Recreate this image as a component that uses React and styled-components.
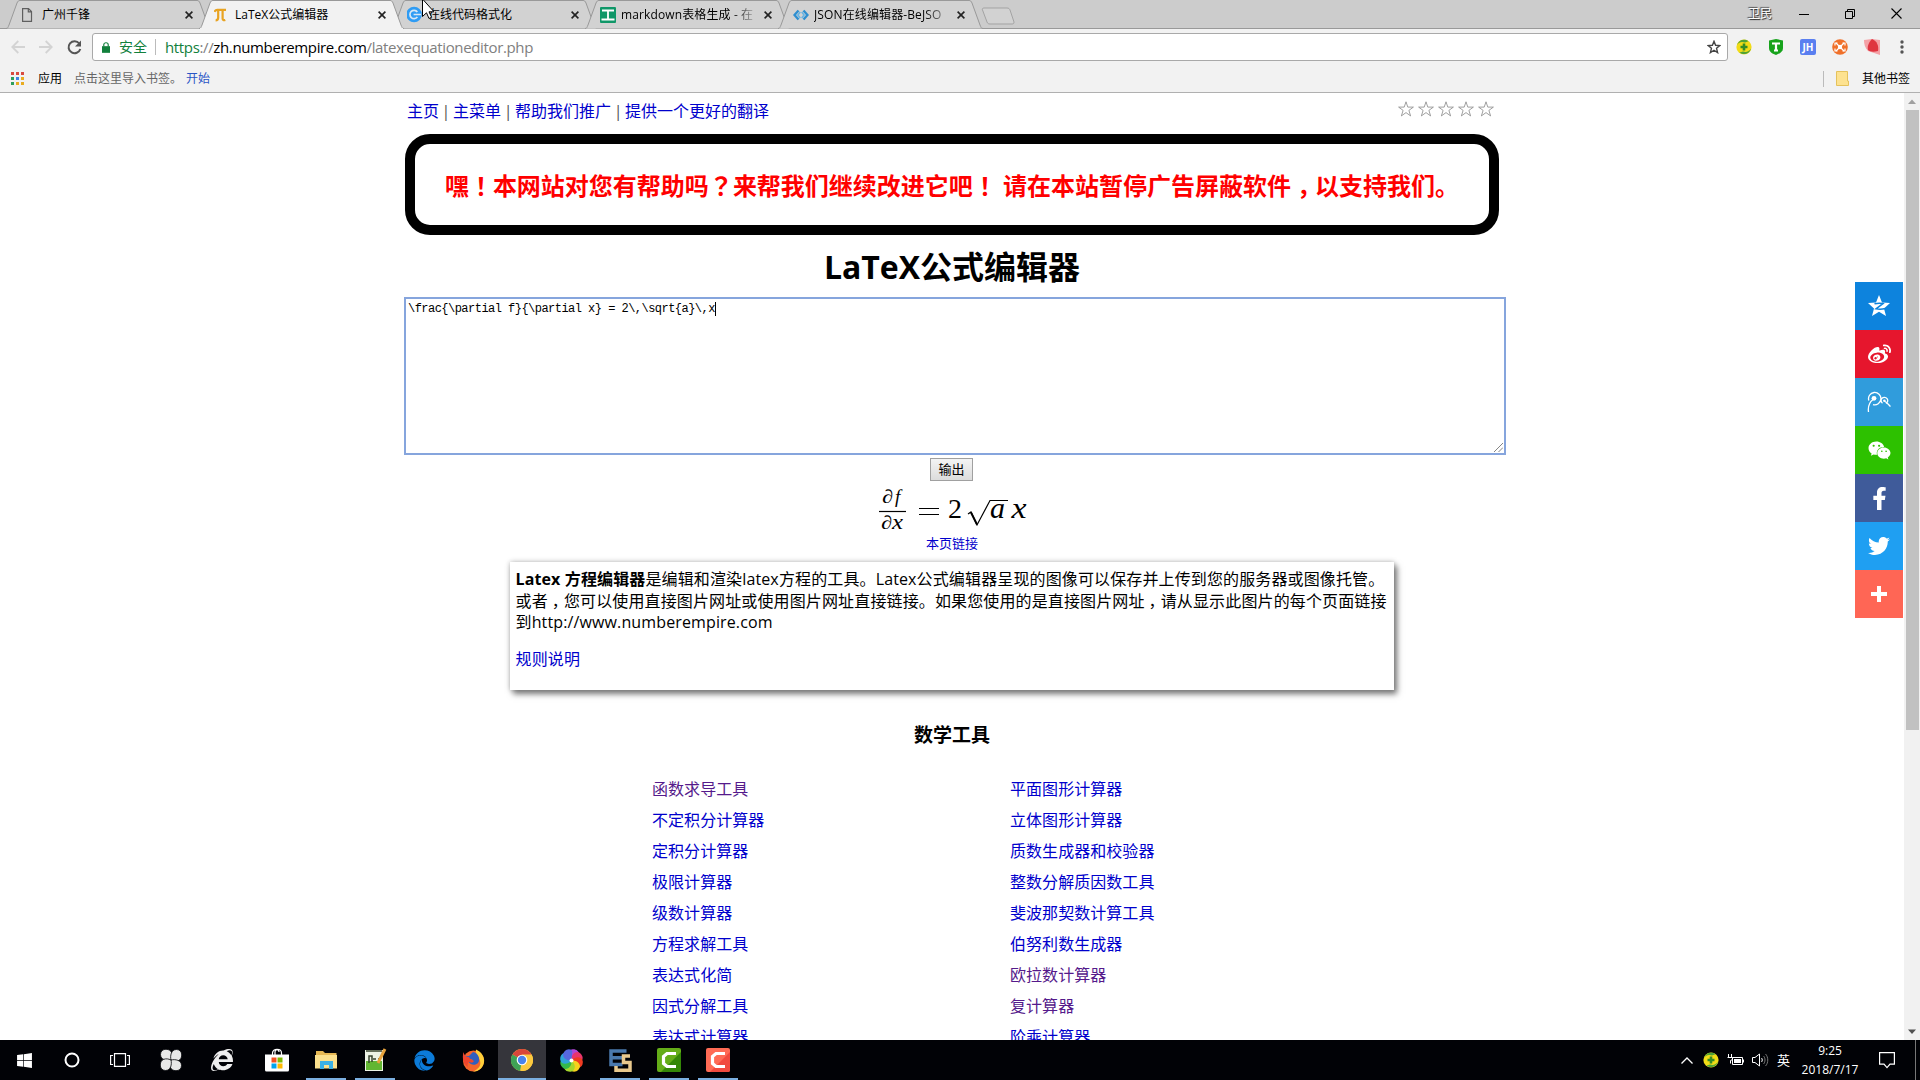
import React from 'react'
import styled, { createGlobalStyle } from 'styled-components'
import { FaWeibo, FaWeixin, FaFacebookF, FaTwitter, FaWindows, FaInternetExplorer, FaEdge } from 'react-icons/fa'

const tabs = [
    { title: '广州千锋', icon: 'file' },
    { title: 'LaTeX公式编辑器', icon: 'pi', active: true },
    { title: '在线代码格式化', icon: 'c' },
    { title: 'markdown表格生成 - 在', icon: 'tool', fade: true },
    { title: 'JSON在线编辑器-BeJSO', icon: 'json', fade: true },
]

const leftTools = ['函数求导工具', '不定积分计算器', '定积分计算器', '极限计算器', '级数计算器', '方程求解工具', '表达式化简', '因式分解工具', '表达式计算器']
const rightTools = ['平面图形计算器', '立体图形计算器', '质数生成器和校验器', '整数分解质因数工具', '斐波那契数计算工具', '伯努利数生成器', '欧拉数计算器', '复计算器', '阶乘计算器']
const visited = ['函数求导工具', '欧拉数计算器', '复计算器']

// full-width marks sit in the middle of their cell
function Zh({ children }) {
    return children.split(/([！？，])/).map((part, i) => {
        if (part === '，') return <Comma key={i}>{part}</Comma>
        return /^[！？]$/.test(part) ? <Mark key={i}>{part}</Mark> : part
    })
}

function TabIcon({ name }) {
    if (name === 'file') return (
        <svg width="16" height="16" viewBox="0 0 16 16" fill="none" stroke="#5f5f5f" strokeWidth="1.2">
            <path d="M1.6 1.6h5.9l3 3v9.8H1.6z M7.3 1.6v3.3h3.2" />
        </svg>
    )
    if (name === 'pi') return (
        <svg width="16" height="16" viewBox="0 0 16 16" fill="none" stroke="#e8a322" strokeWidth="2.2">
            <path d="M.5 5C1.2 3 2 2.9 3.2 2.9H12M4.2 3v7.5c0 2-1 2.8-2.6 2.8M8.6 3v8.6c0 1.4 1 2 2.7 1.3" />
        </svg>
    )
    if (name === 'c') return (
        <svg width="16" height="17" viewBox="1 0 17 17">
            <circle cx="8.5" cy="8.5" r="8.3" fill="#2f9cf4" />
            <path d="M12 5.8A4.4 4.4 0 1 0 12 11.2M8 8.5h8" fill="none" stroke="#d8e8f5" strokeWidth="1.8" />
        </svg>
    )
    if (name === 'tool') return (
        <svg width="16" height="16" viewBox="0 0 16 16">
            <rect width="16" height="16" rx="1" fill="#109768" />
            <path d="M2 3.5h12M8 3.5v9M1.5 12.5h13" stroke="#fff" strokeWidth="1.8" />
        </svg>
    )
    return (
        <svg width="16" height="16" viewBox="0 0 16 16" fill="none" strokeWidth="2.4">
            <path d="M5.500 3.500L1.5 8 5.500 12.5M10.500 3.500L14.5 8 10.500 12.5" stroke="#2f8fd0" />
            <path d="M7.3 5L4.9 8l2.4 3M8.7 5l2.4 3-2.4 3" stroke="#65b4e4" strokeWidth="1.500" />
        </svg>
    )
}

function Tab({ tab }) {
    return (
        <TabBox $active={tab.active}>
            <TabShape viewBox="0 0 205 29">
                <path d="M0 28.5C2 28.5 2 27 3 25L11 3C12 1 12.500 .5 14 .5H191C192.500 .5 193 1 194 3L202 25C203 27 203 28.500 205 28.500" fill={tab.active ? '#f2f2f2' : '#d2d2d2'} stroke="#999" />
                {tab.active && <path d="M1 28.5H204" stroke="#f2f2f2" />}
            </TabShape>
            <TabIcon name={tab.icon} />
            <TabTitle $fade={tab.fade}>{tab.title}</TabTitle>
            <svg width="8" height="8" viewBox="0 0 8 8" stroke="#222" strokeWidth="1.6"><path d="M.6.6l6.800 6.800M7.400.6L.6 7.400" /></svg>
        </TabBox>
    )
}

function Star() {
    return (
        <svg width="16" height="16" viewBox="0 0 16 16" fill="none" stroke="#888" strokeWidth=".8">
            <path d="M8 .8l1.800 5.300h5.600l-4.500 3.300 1.700 5.500L8 11.600l-4.600 3.300 1.700-5.500L.6 6.100h5.600z" />
        </svg>
    )
}

function Guard({ size }) {
    return (
        <svg width={size} height={size} viewBox="0 0 16 16">
            <circle cx="8" cy="8" r="7.6" fill="#f2dc16" />
            <path d="M1 6A7.300 7.300 0 0 1 12.500 2.200L9 3.600A6 6 0 0 0 1 6zM15 9.500A7.300 7.300 0 0 1 3.500 13.600L7 12.600A7 7 0 0 0 15 9.500z" fill="#4fa338" />
            <path d="M8 4.500v7M4.500 8h7" stroke="#338c26" strokeWidth="2.600" />
        </svg>
    )
}

function Browser() {
    return (
        <>
            <TabStrip>
                {tabs.map((tab) => <Tab key={tab.title} tab={tab} />)}
                <NewTab viewBox="0 0 34 18"><path d="M3 1h23c2 0 2.500 1 3 2l4 12c0 1.500-.5 2-2 2H9c-1.500 0-2.500-.5-3-2L1.500 3c-.5-1 0-2 1.500-2z" fill="#d2d2d2" stroke="#a3a3a3" /></NewTab>
                <WindowButtons>
                    <User>卫民</User>
                    <svg width="10" height="10" stroke="#000"><path d="M0 5.500h10" /></svg>
                    <svg width="10" height="10" fill="none" stroke="#000"><path d="M.5 2.500h7v7h-7zM2.500 2V.5h7v7H8" /></svg>
                    <svg width="11" height="11" stroke="#000" strokeWidth="1.100"><path d="M.5.5l10 10M10.500.5l-10 10" /></svg>
                </WindowButtons>
            </TabStrip>
            <Toolbar>
                <NavButtons>
                    <svg width="14" height="14" viewBox="0 0 14 14" fill="none" stroke="#d3d3d3" strokeWidth="1.800"><path d="M14 7H1.500M7.300 1L1.300 7l6 6" /></svg>
                    <svg width="14" height="14" viewBox="0 0 14 14" fill="none" stroke="#d3d3d3" strokeWidth="1.800"><path d="M0 7h12.500M6.700 1l6 6-6 6" /></svg>
                    <svg width="15" height="15" viewBox="0 0 15 15" fill="none" stroke="#555" strokeWidth="2"><path d="M12.300 3.500A6 6 0 1 0 13.300 9" /><path d="M14 .5v6H8z" fill="#555" stroke="none" /></svg>
                </NavButtons>
                <AddressBar>
                    <svg width="8" height="11" viewBox="0 0 9 12"><path d="M0 4.500h9V12H0z" fill="#12803c" /><path d="M2 5V3a2.500 2.300 0 0 1 5 0v2" fill="none" stroke="#12803c" strokeWidth="1.300" /></svg>
                    <Secure>安全</Secure>
                    <Url><b>https</b>://<i>zh.numberempire.com</i>/latexequationeditor.php</Url>
                    <svg width="14" height="14" viewBox="0 0 16 16" fill="none" stroke="#444" strokeWidth="1.600"><path d="M8 1.500l1.800 4.500 4.900.3-3.800 3.200 1.200 4.900L8 11.700l-4.100 2.700 1.200-4.900L1.300 6.300 6.200 6z" /></svg>
                </AddressBar>
                <Extensions>
                    <Guard size={16} />
                    <svg width="16" height="16" viewBox="0 0 16 16"><path d="M1 1.500L8 0l7 1.500V9c0 4-4 6-7 7-3-1-7-3-7-7z" fill="#18a31c" /><path d="M4 4.500h8M8 4.500V12M6 11.500h4" stroke="#fff" strokeWidth="2.200" /></svg>
                    <Jh>JH</Jh>
                    <svg width="16" height="16" viewBox="0 0 16 16"><circle cx="8" cy="8" r="7.800" fill="#f0702a" /><path d="M4 4l8 8M4 12l8-8" stroke="#fff" strokeWidth="1.200" /><circle cx="8" cy="8" r="2.200" fill="#fff" /><path d="M3 6.500V4h2.500M10.500 4H13v2.500M13 9.500V12h-2.500M5.500 12H3V9.500" fill="none" stroke="#fff" strokeWidth="1.200" /></svg>
                    <svg width="16" height="16" viewBox="0 0 16 16"><path d="M0 1l8-1 8 1v15L4 12C1 9 0 5 0 1z" fill="#f4a1a6" /><path d="M8 0c5 2 7 7 6 12-4 1-8 1-10-1-1-4 1-8 4-11z" fill="#df3540" /></svg>
                    <svg width="16" height="16" fill="#555"><circle cx="6" cy="3" r="1.700" /><circle cx="6" cy="8" r="1.700" /><circle cx="6" cy="13" r="1.700" /></svg>
                </Extensions>
            </Toolbar>
            <Bookmarks>
                <Apps>
                    {['#d94b40', '#d94b40', '#d94b40', '#2e9e5b', '#3f84e4', '#e9ac20', '#2e9e5b', '#e9ac20', '#e9ac20'].map((c, i) => <Dot key={i} $color={c} />)}
                </Apps>
                <AppsLabel>应用</AppsLabel>
                <Hint>点击这里导入书签。</Hint>
                <Start href="#">开始</Start>
                <OtherBookmarks>
                    <svg width="13" height="15" viewBox="0 0 13 15"><path d="M.5.5h11V10h1v4.500H.5z" fill="#fde290" stroke="#e5c25c" /></svg>
                    其他书签
                </OtherBookmarks>
            </Bookmarks>
        </>
    )
}

function Formula() {
    return (
        <FormulaSvg viewBox="0 0 150 53">
            <text x="5" y="21.500" fontSize="19" textLength="11" lengthAdjust="spacingAndGlyphs">∂</text>
            <text x="18" y="21.500" fontSize="19">f</text>
            <path d="M2 30.500h27" strokeWidth="1.200" />
            <text x="4" y="47.500" fontSize="19" textLength="11" lengthAdjust="spacingAndGlyphs">∂</text>
            <text x="15" y="47.500" fontSize="20" textLength="11" lengthAdjust="spacingAndGlyphs">x</text>
            <path d="M42 27.500h20M42 33.500h20" strokeWidth="1.200" />
            <Digit x="71" y="37">2</Digit>
            <path d="M91 33l3-2 6 13 13-24.500h18" fill="none" strokeWidth="1.200" />
            <path d="M94 31.500l6 12" strokeWidth="2" />
            <text x="113" y="37" fontSize="29" textLength="15" lengthAdjust="spacingAndGlyphs">a</text>
            <text x="134.500" y="37" fontSize="29" textLength="15" lengthAdjust="spacingAndGlyphs">x</text>
        </FormulaSvg>
    )
}

function ToolList({ items }) {
    return (
        <List>
            {items.map((item) => <li key={item}><Link href="#" $visited={visited.includes(item)}>{item}</Link></li>)}
        </List>
    )
}

function Page() {
    return (
        <PageBox>
            <Content>
                <TopRow>
                    <Crumbs>
                        <Link href="#">主页</Link><span>|</span>
                        <Link href="#">主菜单</Link><span>|</span>
                        <Link href="#">帮助我们推广</Link><span>|</span>
                        <Link href="#">提供一个更好的翻译</Link>
                    </Crumbs>
                    <Rating><Star /><Star /><Star /><Star /><Star /></Rating>
                </TopRow>
                <Banner><Zh>嘿！本网站对您有帮助吗？来帮我们继续改进它吧！ 请在本站暂停广告屏蔽软件，以支持我们。</Zh></Banner>
                <Title>LaTeX公式编辑器</Title>
                <Editor>
                    <Code>{'\\frac{\\partial f}{\\partial x} = 2\\,\\sqrt{a}\\,x'}</Code>
                    <Caret />
                    <Grip viewBox="0 0 10 10"><path d="M0 10L10 0M5 10l5-5" /></Grip>
                </Editor>
                <Output>输出</Output>
                <Formula />
                <PageLink href="#">本页链接</PageLink>
                <Info>
                    <p><b>Latex 方程编辑器</b>是编辑和渲染latex方程的工具。Latex公式编辑器呈现的图像可以保存并上传到您的服务器或图像托管。<br />
                        <Zh>或者，您可以使用直接图片网址或使用图片网址直接链接。如果您使用的是直接图片网址，请从显示此图片的每个页面链接</Zh><br />
                        到http://www.numberempire.com</p>
                    <Link href="#">规则说明</Link>
                </Info>
                <Subtitle>数学工具</Subtitle>
                <Lists>
                    <ToolList items={leftTools} />
                    <ToolList items={rightTools} />
                </Lists>
            </Content>
        </PageBox>
    )
}

function Share() {
    return (
        <ShareBar>
            <ShareButton $bg="#0d83dd">
                <svg width="24" height="24" viewBox="0 0 24 24"><path d="M12 1l3 7.500 8 .6-6 5.300 2 7.600-7-4.200L5 22l2-7.600-6-5.300 8-.6z" fill="#fff" /><path d="M7.500 9.800c3-.8 6-.8 8.500-.2l-7 5.200c3 .5 6 .5 9.500-.3" fill="none" stroke="#0d83dd" strokeWidth="1.500" /></svg>
            </ShareButton>
            <ShareButton $bg="#e6162d"><FaWeibo size={23} /></ShareButton>
            <ShareButton $bg="#309cdc">
                <svg width="24" height="22" viewBox="0 0 24 22" fill="none" stroke="#fff" strokeWidth="1.300"><path d="M1.500 21C.8 16 2 11.500 6.500 8M6 13.600A6.200 6.200 0 1 0 1.800 9.500M15.500 12.300a3.300 3.300 0 1 1 3.500.2M18 10.500c2 1 3.500 3 5.500 5" /><circle cx="7" cy="7.300" r="2.400" fill="#fff" stroke="none" /><circle cx="17.400" cy="9.700" r="1.300" fill="#fff" stroke="none" /></svg>
            </ShareButton>
            <ShareButton $bg="#2dc100"><FaWeixin size={23} /></ShareButton>
            <ShareButton $bg="#3f5b9a"><FaFacebookF size={23} /></ShareButton>
            <ShareButton $bg="#1f9ff2"><FaTwitter size={22} /></ShareButton>
            <ShareButton $bg="#ff6655"><svg width="16" height="16"><path d="M8 0v16M0 8h16" stroke="#fff" strokeWidth="4" /></svg></ShareButton>
        </ShareBar>
    )
}

function Camtasia({ from, to }) {
    return (
        <svg width="24" height="24" viewBox="0 0 24 24">
            <rect width="24" height="24" rx="2" fill={from} />
            <path d="M24 4v18a2 2 0 0 1-2 2H4z" fill={to} />
            <path d="M19 5.500H10L6.500 8.500v7l3.500 3h9" fill="none" stroke="#fff" strokeWidth="3.200" />
        </svg>
    )
}

function TaskBar() {
    return (
        <Bar>
            <Task $w={48}><FaWindows size={17} color="#fff" /></Task>
            <Task $w={48}><svg width="16" height="16"><circle cx="8" cy="8" r="6.500" fill="none" stroke="#fff" strokeWidth="2" /></svg></Task>
            <Task $w={48}><svg width="20" height="14" fill="none" stroke="#fff" strokeWidth="1.200"><path d="M4.500.6h11v12.800h-11zM3 2.500H.6v9H3M17 2.500h2.400v9H17" /></svg></Task>
            <Task $w={53}>
                <svg width="22" height="22" viewBox="-11 -11 22 22">
                    {[0, 90, 180, 270].map((deg) => (
                        <path key={deg} d="M0 0C-4 1-10.500 0-10.500-5.500C-10.500-9-8-10.700-5-10.700C1-10.700 2.500-5 0 0z" fill="#e8e8e8" stroke="#010206" strokeWidth=".8" transform={`rotate(${deg})`} />
                    ))}
                </svg>
            </Task>
            <Task $w={50}><FaInternetExplorer size={22} color="#eee" /></Task>
            <Task $w={59}>
                <svg width="24" height="24" viewBox="0 0 24 24"><path d="M0 6.500h24V22a1.500 1.500 0 0 1-1.500 1.500h-21A1.500 1.500 0 0 1 0 22z" fill="#fff" /><path d="M7.500 7V5c0-5 9-5 9 0v2M10 7V4c0-3 4-3 4 0" fill="none" stroke="#fff" strokeWidth="1.200" /><path d="M6.500 9.500h5v5h-5z" fill="#f25022" /><path d="M12.500 9.500h5v5h-5z" fill="#7fba00" /><path d="M6.500 15.500h5v5h-5z" fill="#00a4ef" /><path d="M12.500 15.500h5v5h-5z" fill="#ffb900" /></svg>
            </Task>
            <Running>
                <Task $w={40} $open>
                    <svg width="23" height="20" viewBox="0 0 23 20"><path d="M1 1h7l2 2h11.500v15H1z" fill="#e6b854" /><path d="M0 5h22v13.500H0z" fill="#fbe08d" /><path d="M5 11h13v8h-4v-4H9v4H5z" fill="#3bb0e4" /></svg>
                </Task>
                <Task $w={40} $open>
                    <svg width="23" height="24" viewBox="0 0 23 24"><path d="M1 2h18v21H1z" fill="#edf3e6" /><path d="M2 13h16v9H2z" fill="#62b632" /><path d="M2 3h16M5 15V8h3v6M9 11h3M14 11h2" stroke="#39442f" strokeWidth="1.500" fill="none" /><path d="M21 1l-7 14" stroke="#e7a33c" strokeWidth="3" /></svg>
                </Task>
                <Task $w={40}><FaEdge size={21} color="#0c7bd8" /></Task>
                <Task $w={40}>
                    <svg width="23" height="23" viewBox="0 0 23 23"><circle cx="11.500" cy="12" r="10.500" fill="#f5652c" /><path d="M14 .5c7 3 10 10 7 16-2 4-6 6-10 6 7-3 9-8 6-13-1-3-4-5-3-9z" fill="#ffcf3a" /><path d="M1 5c2 2 4 2 6 2l4-4c5 1 8 7 5 11-3 3-8 2-10-2 2 1 4 1 5-1L6 9z" fill="#315fc0" /><path d="M1.500 3C0 9 1 15 6 18c-1-3 0-5 2-5 1 1 3 1 4-1L8 10l-1-2C4 8 2 6 1.500 3z" fill="#f0442d" /></svg>
                </Task>
                <Task $w={48} $open $current>
                    <svg width="22" height="22" viewBox="0 0 22 22"><circle cx="11" cy="11" r="11" fill="#fbc93f" /><path d="M11 11L1.500 5.500A11 11 0 0 1 20.500 5.500z" fill="#d9463a" /><path d="M11 11L9 22A11 11 0 0 1 1.500 5.500z" fill="#3fa256" /><path d="M11 5.500h9.500A11 11 0 0 1 10 22l6-8z" fill="#fbc93f" /><circle cx="11" cy="11" r="5.300" fill="#fff" /><circle cx="11" cy="11" r="4.200" fill="#4a83ec" /></svg>
                </Task>
                <Task $w={40}>
                    <svg width="23" height="23" viewBox="-11.5 -11.5 23 23">
                        {['#b245d8', '#e8356d', '#ef3b22', '#f6d21c', '#a6d72c', '#34b94a', '#2fa4d8', '#5668e0'].map((c, i) => <path key={c} d="M0 0C-5-4-4-11 1-11.300S8-8 7-6z" fill={c} transform={`rotate(${i * 45})`} />)}
                        <circle r="2" fill="#fff" />
                    </svg>
                </Task>
                <Task $w={40} $open>
                    <svg width="23" height="23" viewBox="0 0 23 23" fill="none" strokeWidth="3.500"><path d="M17.500 2H2v13.500h11.500M2 8.700h11" stroke="#4a79ad" /><path d="M21 7h-6.500v6.500H21v7.700H7V17" stroke="#e9c98d" /></svg>
                </Task>
                <Task $w={40} $open><Camtasia from="#64ad18" to="#348707" /></Task>
                <Task $w={40} $open><Camtasia from="#ff6b55" to="#f14a3e" /></Task>
            </Running>
            <Tray>
                <svg width="14" height="7" fill="none" stroke="#fff" strokeWidth="1.300"><path d="M.5 6.500L6 1l5.500 5.500" /></svg>
                <Guard size={16} />
                <svg width="17" height="12" fill="none" stroke="#fff"><path d="M5.500 3.500h10v7h-10zM16.500 5.500v3M1.500 0v3M4.500 0v3M.5 3.500h5v2l-2 1v3" /><path d="M7 5h7v4H7z" fill="#fff" stroke="none" /></svg>
                <svg width="17" height="14" fill="none" stroke="#fff"><path d="M.5 4.500H3L7.500 1v12L3 9.500H.5z" /><path d="M9.500 5c1 1 1 3 0 4" /><path d="M11.500 3c2 2 2 6 0 8M13.500 1c3 3 3 9 0 12" stroke="#777" /></svg>
                <Lang>英</Lang>
                <Clock>9:25<br />2018/7/17</Clock>
                <Notice width="16" height="17" fill="none" stroke="#fff" strokeWidth="1.200"><path d="M.6.600h14.800v11.500H11l-3 3.500-3-3.500H.6z" /></Notice>
                <Edge />
            </Tray>
        </Bar>
    )
}

export default function App() {
    return (
        <Screen>
            <GlobalStyle />
            <Browser />
            <View>
                <Page />
                <ScrollBar>
                    <Arrow viewBox="0 0 16 17"><path d="M4 11h8L8 6.500z" fill="#a0a0a0" /></Arrow>
                    <Thumb />
                    <Arrow viewBox="0 0 16 17"><path d="M4 6.500h8L8 11z" fill="#505050" /></Arrow>
                </ScrollBar>
                <Share />
            </View>
            <TaskBar />
            <Pointer viewBox="0 0 12 19"><path d="M.5-1v17.500l4-3.700 2.500 5.700 2.600-1.200L7 11.800h5z" fill="#fff" stroke="#000" /></Pointer>
        </Screen>
    )
}

const GlobalStyle = createGlobalStyle`
body{
    margin:0;
    background:#fff;
    overflow:hidden;
    font-family:"Open Sans", "Noto Sans CJK SC", sans-serif;
}
*{
    box-sizing:border-box;
}
svg{
    flex-shrink:0;
}
`

const Screen = styled.div`
width:1920px;
height:1080px;
display:flex;
flex-direction:column;
overflow:hidden;
`

const Mark = styled.span`
font-family:"Noto Sans CJK TC", sans-serif;
`

const Comma = styled.span`
padding:0 0.25em;
font-family:"Noto Sans CJK SC", sans-serif;
font-feature-settings:"halt";
`

const TabStrip = styled.div`
height:29px;
flex-shrink:0;
display:flex;
padding-left:6px;
background:#ccc;
border-bottom:1px solid #999;
`

const TabBox = styled.div`
position:relative;
z-index:${props => props.$active ? 2 : 1};
width:205px;
height:29px;
margin-right:-12px;
flex-shrink:0;
display:flex;
align-items:center;
padding:0 18px 0 15px;
font-size:12px;
`

const TabShape = styled.svg`
position:absolute;
z-index:-1;
left:0;
top:0;
width:205px;
height:29px;
`

const TabTitle = styled.div`
flex:1;
margin:0 3px 0 5px;
white-space:nowrap;
line-height:20px;
letter-spacing:${props => props.$fade ? '0.12px' : '0'};
mask-image:${props => props.$fade ? 'linear-gradient(to right, #000 110px, rgba(0,0,0,0.15) 136px)' : 'none'};
`

const NewTab = styled.svg`
width:34px;
height:18px;
margin:7px 0 0 10px;
`

const WindowButtons = styled.div`
display:flex;
align-items:center;
gap:36px;
height:27px;
margin-left:auto;
padding-right:18px;
`

const User = styled.div`
margin-right:-9px;
font-size:12px;
line-height:20px;
color:#fff;
text-shadow:1px 1px 1px #222, -1px -1px 1px #555;
`

const Toolbar = styled.div`
height:32px;
flex-shrink:0;
display:flex;
padding-top:4px;
background:#f2f2f2;
`

const NavButtons = styled.div`
display:flex;
align-items:center;
gap:14px;
width:92px;
padding-left:11px;
`

const AddressBar = styled.div`
width:1636px;
height:28px;
display:flex;
align-items:center;
padding:0 6px 0 9px;
background:#fff;
border:1px solid #a9a9a9;
border-radius:3px;
`

const Secure = styled.div`
margin-left:9px;
padding-right:8px;
border-right:1px solid #bbb;
font-size:14px;
line-height:16px;
color:#12803c;
`

const Url = styled.div`
flex:1;
padding-left:9px;
font-size:15px;
line-height:18px;
padding-bottom:1px;
letter-spacing:-0.36px;
color:#808080;
b{
    font-weight:400;
    color:#12803c;
}
i{
    font-style:normal;
    color:#000;
}
`

const Extensions = styled.div`
display:flex;
align-items:center;
gap:16px;
padding-left:8px;
`

const Jh = styled.div`
width:16px;
height:16px;
border-radius:2px;
background:#5a7ff0;
color:#fff;
font-size:10px;
font-weight:700;
line-height:16px;
text-align:center;
`

const Bookmarks = styled.div`
height:32px;
flex-shrink:0;
display:flex;
align-items:center;
padding:4px 10px 0 11px;
background:#f2f2f2;
border-bottom:1px solid #b0b0b0;
font-size:12px;
line-height:18px;
`

const Apps = styled.div`
display:grid;
grid-template-columns:repeat(3, 3px);
gap:2px;
`

const Dot = styled.span`
height:3px;
background:${props => props.$color};
`

const AppsLabel = styled.span`
margin-left:14px;
`

const Hint = styled.span`
margin-left:12px;
color:#666;
`

const Start = styled.a`
margin-left:4px;
color:#2a56c6;
text-decoration:none;
`

const OtherBookmarks = styled.div`
margin-left:auto;
display:flex;
align-items:center;
gap:13px;
height:16px;
padding-left:12px;
border-left:1px solid #bbb;
`

const View = styled.div`
position:relative;
height:947px;
flex-shrink:0;
display:flex;
`

const PageBox = styled.div`
flex:1;
height:947px;
overflow:hidden;
`

const Content = styled.div`
width:1094px;
margin:0 auto;
display:flex;
flex-direction:column;
align-items:center;
`

const TopRow = styled.div`
width:100%;
height:41px;
display:flex;
justify-content:space-between;
padding-left:2px;
`

const Crumbs = styled.div`
font-size:16px;
line-height:36px;
span{
    display:inline-block;
    width:14px;
    text-align:center;
    color:#555;
}
`

const Rating = styled.div`
display:flex;
gap:4px;
padding:8px 5px 0 0;
`

const Link = styled.a`
color:${props => props.$visited ? '#551a8b' : '#0000cc'};
text-decoration:none;
`

const Banner = styled.div`
width:100%;
height:101px;
border:10px solid #000;
border-radius:25px;
color:#f00;
font-size:24px;
font-weight:700;
line-height:82px;
text-align:center;
white-space:nowrap;
`

const Title = styled.h1`
height:62px;
margin:0;
font-size:32px;
line-height:64px;
`

const Editor = styled.div`
position:relative;
align-self:flex-start;
width:1102px;
height:158px;
margin-left:-1px;
padding:3px 2px;
display:flex;
border:2px solid #86a5dd;
`

const Code = styled.span`
font-family:"Liberation Mono", monospace;
font-size:12px;
letter-spacing:-0.53px;
line-height:15px;
white-space:pre;
`

const Caret = styled.span`
width:1px;
height:14px;
background:#000;
`

const Grip = styled.svg`
position:absolute;
right:1px;
bottom:1px;
width:9px;
height:9px;
stroke:#777;
`

const Output = styled.button`
width:43px;
height:23px;
margin:3px 1px 0 0;
padding:0;
border:1px solid #a0a0a0;
background:linear-gradient(#f4f4f4, #dcdcdc);
font-family:inherit;
font-size:13px;
line-height:19px;
`

const FormulaSvg = styled.svg`
width:150px;
height:53px;
stroke:#000;
text{
    font-family:"Liberation Serif", serif;
    font-style:italic;
    stroke:none;
}
`

const Digit = styled.text`
&&{
    font-style:normal;
    font-size:28px;
}
`

const PageLink = styled(Link)`
font-size:13px;
line-height:19px;
`

const Info = styled.div`
width:884px;
height:128px;
margin:9px 1px 0 0;
padding:7px 0 0 6px;
box-shadow:3px 4px 6px #777, 0 0 5px #bbb;
font-size:16px;
line-height:21px;
letter-spacing:0.13px;
white-space:nowrap;
p{
    margin:0 0 16px;
}
`

const Subtitle = styled.h3`
height:84px;
margin:0;
font-size:19px;
line-height:90px;
`

const Lists = styled.div`
width:600px;
display:grid;
grid-template-columns:358px 1fr;
`

const List = styled.ul`
margin:0;
padding:0;
list-style:none;
font-size:16px;
line-height:31px;
letter-spacing:0.05px;
li{
    height:31px;
}
`

const ScrollBar = styled.div`
width:16px;
height:947px;
display:flex;
flex-direction:column;
align-items:center;
background:#f1f1f1;
`

const Arrow = styled.svg`
width:16px;
height:17px;
`

const Thumb = styled.div`
width:13px;
height:620px;
margin-bottom:auto;
background:#c1c1c1;
`

const ShareBar = styled.div`
position:absolute;
top:189px;
right:17px;
`

const ShareButton = styled.div`
width:48px;
height:48px;
display:flex;
align-items:center;
justify-content:center;
background:${props => props.$bg};
color:#fff;
`

const Bar = styled.div`
height:40px;
flex-shrink:0;
display:flex;
background:#010206;
color:#fff;
`

const Running = styled.div`
display:flex;
gap:9px;
`

const Task = styled.div`
width:${props => props.$w}px;
height:40px;
flex-shrink:0;
display:flex;
align-items:center;
justify-content:center;
margin:${props => props.$current ? '0 -4px' : '0'};
background:${props => props.$current ? '#35353b' : 'transparent'};
box-shadow:${props => props.$open ? 'inset 0 -2px #7bafe0' : 'none'};
`

const Tray = styled.div`
margin-left:auto;
display:flex;
align-items:center;
gap:8px;
`

const Lang = styled.span`
font-size:13px;
line-height:20px;
`

const Clock = styled.div`
width:64px;
font-size:12px;
line-height:19px;
text-align:center;
`

const Notice = styled.svg`
margin-left:9px;
`

const Edge = styled.div`
width:5px;
height:40px;
margin-left:12px;
border-left:1px solid #777;
`

const Pointer = styled.svg`
position:absolute;
left:422px;
top:0;
z-index:5;
width:12px;
height:19px;
`
